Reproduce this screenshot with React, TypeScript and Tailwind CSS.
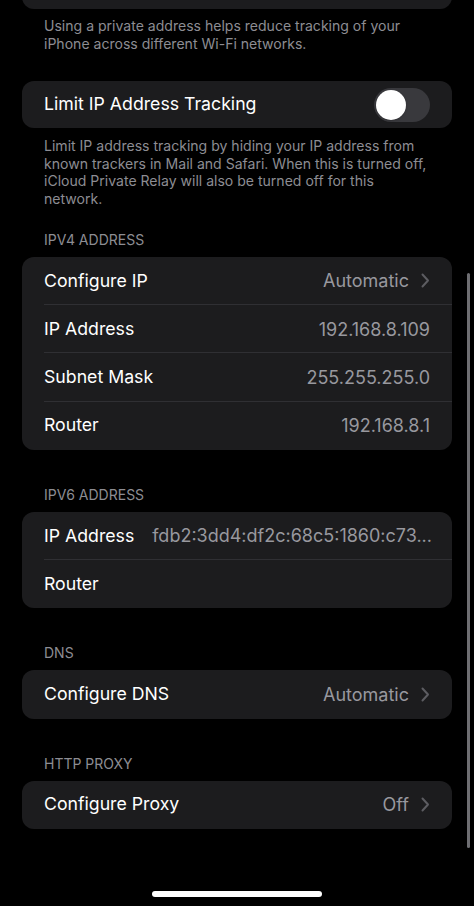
import React from "react";

const font = { fontFamily: "Inter, 'Noto Sans', sans-serif" };

function Chevron() {
  return (
    <svg width="9" height="15" viewBox="0 0 9 15" className="ml-[12px]">
      <path d="M1.5 1.5 L7 7.5 L1.5 13.5" fill="none" stroke="#5c5c61" strokeWidth="2" strokeLinecap="round" strokeLinejoin="round" />
    </svg>
  );
}

function Row({ label, value, chevron, last }: { label: string; value?: string; chevron?: boolean; last?: boolean }) {
  return (
    <div className="relative flex h-[48.25px] items-center pl-[22px] pr-[22px]">
      <span className="shrink-0 text-[17.7px] text-white">{label}</span>
      <span className="ml-[18px] min-w-0 flex-1 whitespace-nowrap text-right text-[18px] text-[#98989e]">{value}</span>
      {chevron && <Chevron />}
      {!last && <div className="absolute bottom-0 left-[22px] right-0 h-px bg-[#2f2f33]" />}
    </div>
  );
}

function Header({ children }: { children: React.ReactNode }) {
  return <div className="mb-[8px] px-[22px] text-[14px] leading-[18px] text-[#8d8d93]">{children}</div>;
}

function Card({ children }: { children: React.ReactNode }) {
  return <div className="overflow-hidden rounded-[12px] bg-[#1c1c1e]">{children}</div>;
}

export default function App() {
  return (
    <div className="relative h-[906px] w-[474px] overflow-hidden bg-black" style={font}>
      <div className="px-[22px]">
        <div className="-mt-[40px] h-[49px] rounded-[12px] bg-[#1c1c1e]" />
        <div className="mt-[8px] px-[22px] text-[14.05px] leading-[18px] text-[#8d8d93]">
          Using a private address helps reduce tracking of your iPhone across different Wi-Fi networks.
        </div>
        <div className="mt-[28px] flex h-[47px] items-center rounded-[12px] bg-[#1c1c1e] pl-[22px] pr-[22px]">
          <span className="flex-1 text-[17.7px] text-white">Limit IP Address Tracking</span>
          <div className="flex h-[34px] w-[56px] items-center rounded-full bg-[#39393d] pl-[2px]">
            <div className="h-[30px] w-[30px] rounded-full bg-white shadow" />
          </div>
        </div>
        <div className="mt-[9px] px-[22px] text-[14.05px] leading-[17.7px] text-[#8d8d93]">
          Limit IP address tracking by hiding your IP address from known trackers in Mail and Safari. When this is turned off, iCloud Private Relay will also be turned off for this network.
        </div>

        <div className="mt-[23px]">
          <Header>IPV4 ADDRESS</Header>
          <Card>
            <Row label="Configure IP" value="Automatic" chevron />
            <Row label="IP Address" value="192.168.8.109" />
            <Row label="Subnet Mask" value="255.255.255.0" />
            <Row label="Router" value="192.168.8.1" last />
          </Card>
        </div>

        <div className="mt-[36px]">
          <Header>IPV6 ADDRESS</Header>
          <Card>
            <Row label="IP Address" value="fdb2:3dd4:df2c:68c5:1860:c73..." />
            <Row label="Router" last />
          </Card>
        </div>

        <div className="mt-[36px]">
          <Header>DNS</Header>
          <Card>
            <Row label="Configure DNS" value="Automatic" chevron last />
          </Card>
        </div>

        <div className="mt-[36px]">
          <Header>HTTP PROXY</Header>
          <Card>
            <Row label="Configure Proxy" value="Off" chevron last />
          </Card>
        </div>
      </div>

      <div className="absolute left-[467px] top-[273px] h-[575px] w-[3px] rounded-full bg-[#6e6e72]" />
      <div className="absolute left-[152px] top-[891px] h-[6px] w-[170px] rounded-full bg-white" />
    </div>
  );
}
